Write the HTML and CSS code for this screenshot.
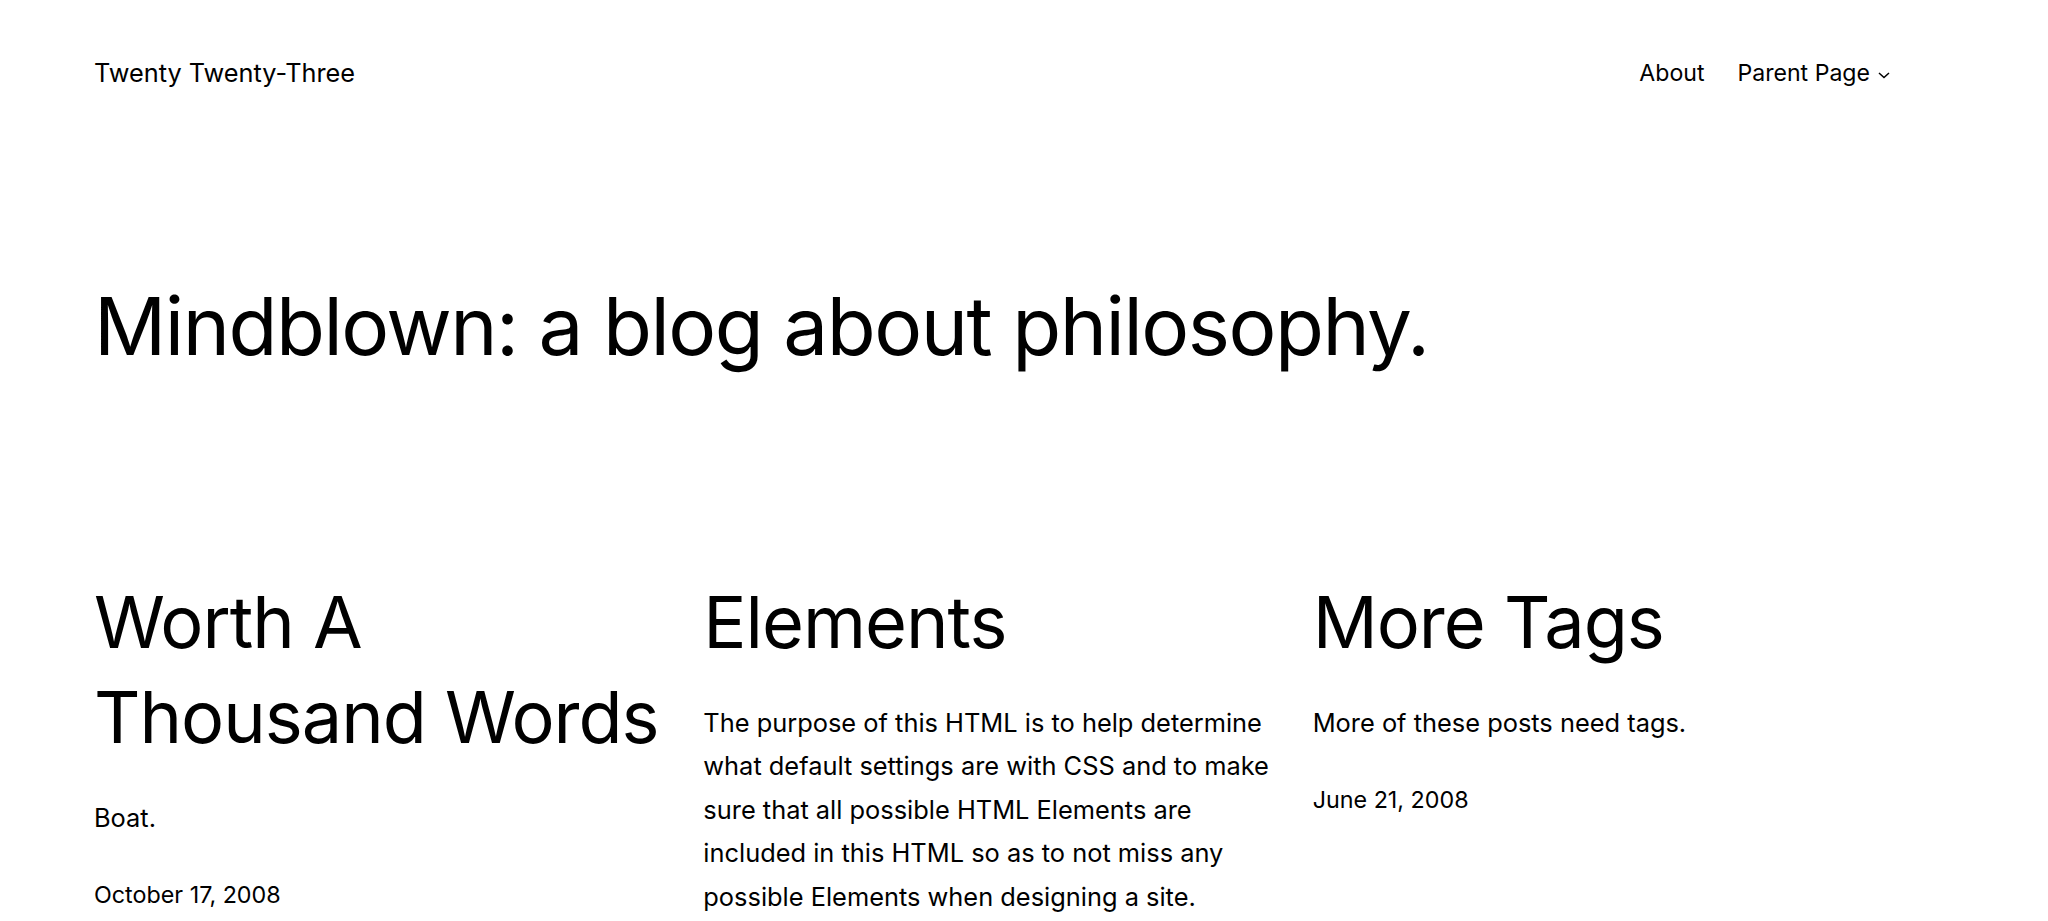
FILE: index.html
```html
<!DOCTYPE html>
<html lang="en">
<head>
<meta charset="utf-8">
<title>Twenty Twenty-Three</title>
<link rel="stylesheet" href="styles.css">
</head>
<body>
<div class="page">
  <header class="site-header">
    <a class="site-title" href="#">Twenty Twenty-Three</a>
    <nav class="site-nav">
      <a class="nav-item" href="#">About</a>
      <a class="nav-item has-sub" href="#">Parent Page<svg class="chev" viewBox="0 0 12 7" width="12" height="7" aria-hidden="true"><path d="M1 1 L6 5.6 L11 1" fill="none" stroke="#000" stroke-width="1.5"/></svg></a>
    </nav>
  </header>
  <main class="main">
    <h1 class="hero">Mindblown: a blog about philosophy.</h1>
    <ul class="posts">
      <li class="post">
        <h2 class="post-title">Worth A Thousand Words</h2>
        <p class="excerpt">Boat.</p>
        <div class="post-date">October 17, 2008</div>
      </li>
      <li class="post">
        <h2 class="post-title">Elements</h2>
        <p class="excerpt">The purpose of this HTML is to help determine what default settings are with CSS and to make sure that all possible HTML Elements are included in this HTML so as to not miss any possible Elements when designing a site.</p>
      </li>
      <li class="post">
        <h2 class="post-title">More Tags</h2>
        <p class="excerpt">More of these posts need tags.</p>
        <div class="post-date">June 21, 2008</div>
      </li>
    </ul>
  </main>
</div>
</body>
</html>
```
FILE: styles.css
```css
html, body {
  margin: 0;
  padding: 0;
  background: #ffffff;
  color: #000000;
}
body {
  font-family: Inter, "Liberation Sans", sans-serif;
}
a {
  color: inherit;
  text-decoration: none;
}
.page {
  width: 1796px;
  padding-left: 94px;
}
.site-header {
  display: flex;
  justify-content: space-between;
  align-items: center;
  padding-top: 53px;
}
.site-title {
  font-size: 25.3px;
  line-height: 40px;
}
.site-nav {
  display: flex;
  gap: 33px;
  font-size: 23.1px;
  line-height: 40px;
}
.nav-item {
  display: flex;
  align-items: center;
}
.chev {
  margin-left: 8px;
  margin-top: 4px;
}
.main {
  padding-top: 185px;
}
.hero {
  margin: 0;
  font-size: 80px;
  font-weight: 400;
  line-height: 96px;
  letter-spacing: -1.5px;
}
.posts {
  list-style: none;
  margin: 200px 0 0;
  padding: 0;
  display: grid;
  grid-template-columns: repeat(3, 1fr);
  column-gap: 32px;
}
.post-title {
  margin: 0;
  font-size: 72px;
  font-weight: 400;
  line-height: 95px;
  letter-spacing: -1px;
}
.excerpt {
  margin: 32px 0 0;
  font-size: 25.4px;
  line-height: 43.4px;
}
.post-date {
  margin-top: 38px;
  font-size: 23.3px;
  line-height: 36px;
}
```
